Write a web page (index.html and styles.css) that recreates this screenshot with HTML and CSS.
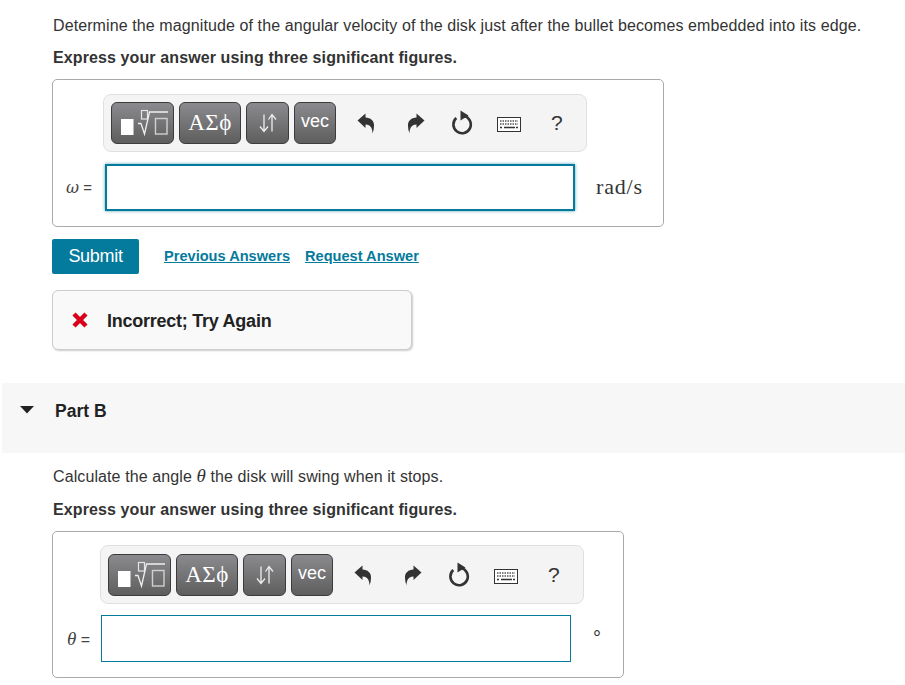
FILE: index.html
```html
<!DOCTYPE html>
<html>
<head>
    <title>Part B</title>
    <link rel="stylesheet" href="styles.css">
</head>
<body>
    <div class="part">
        <p class="prompt">Determine the magnitude of the angular velocity of the disk just after the bullet becomes embedded into its edge.</p>
        <p class="hint">Express your answer using three significant figures.</p>
        <div class="answer-box box-a">
            <div class="toolbar">
                <span class="tool tool-tpl">
                    <svg width="61" height="40" viewBox="1 1 61 40">
                        <rect x="10" y="17" width="12.5" height="16" fill="#fff"/>
                        <rect x="30.5" y="8.5" width="6" height="8.5" fill="none" stroke="#e4e4e4" stroke-width="1.2"/>
                        <path d="M27 21.5 H30 L33.5 32 L38.5 10 H57" fill="none" stroke="#eee" stroke-width="1.3"/>
                        <rect x="44.5" y="16.5" width="11.5" height="15.5" fill="none" stroke="#d0d0d0" stroke-width="1.4"/>
                    </svg>
                </span>
                <span class="tool tool-greek">ΑΣϕ</span>
                <span class="tool tool-arrows">
                    <svg width="18" height="20" viewBox="0 0 18 20"><path d="M5 1.5 V18 M1 13.5 L5 18.5 L9 13.5 M13 18.5 V2 M9.5 6.5 L13 1.5 L17 6.5" fill="none" stroke="#eee" stroke-width="1.3"/></svg>
                </span>
                <span class="tool tool-vec">vec</span>
                <div class="actions">
                    <svg class="act-undo" width="18" height="21" viewBox="0 0 18 21"><path d="M0.5 7.5 L8.5 0.5 V4.5 C13.5 4.5 17.5 8 17 13 C17 15.5 16.5 18 15.5 20.5 C15.5 16 14 11.5 8.5 11.5 V15 Z" fill="#333"/></svg>
                    <svg class="act-redo" width="18" height="21" viewBox="0 0 18 21"><path d="M17.5 7.5 L9.5 0.5 V4.5 C4.5 4.5 0.5 8 1 13 C1 15.5 1.5 18 2.5 20.5 C2.5 16 4 11.5 9.5 11.5 V15 Z" fill="#333"/></svg>
                    <svg class="act-reset" width="22" height="25" viewBox="0 0 22 25"><path d="M13 6 A8.7 8.7 0 1 1 5.3 8" fill="none" stroke="#333" stroke-width="2.6"/><path d="M9.5 0.5 L17.5 5.5 L9.5 10.5 Z" fill="#333"/></svg>
                    <svg class="act-keys" width="24" height="15" viewBox="0 0 24 15"><rect x="0.5" y="0.5" width="23" height="14" fill="#fff" stroke="#333"/><path d="M3 4 H21 M3 7 H21" stroke="#555" stroke-width="1.6" stroke-dasharray="1.5 1"/><path d="M3 10.5 H5 M7 10.5 H18 M19 10.5 H21" stroke="#333" stroke-width="1.6"/></svg>
                    <span class="act-help">?</span>
                </div>
            </div>
            <div class="entry-row">
                <span class="var-label"><i class="var">ω</i> =</span>
                <div class="entry entry-focus"></div>
                <span class="unit">rad/s</span>
            </div>
        </div>
        <div class="submit-row">
            <button class="submit-btn">Submit</button>
            <a class="link link-prev" href="#">Previous Answers</a>
            <a class="link" href="#">Request Answer</a>
        </div>
        <div class="feedback">
            <svg width="18" height="18" viewBox="0 0 18 18"><path d="M3 3 L15 15 M15 3 L3 15" stroke="#d9001b" stroke-width="4.4"/></svg>
            <span>Incorrect; Try Again</span>
        </div>
    </div>

    <div class="part-head">
        <svg width="14" height="8" viewBox="0 0 14 8"><path d="M0 0 H14 L7 7.5 Z" fill="#222"/></svg>
        <h2>Part B</h2>
    </div>

    <div class="part">
        <p class="prompt prompt-b">Calculate the angle <i class="theta">θ</i> the disk will swing when it stops.</p>
        <p class="hint hint-b">Express your answer using three significant figures.</p>
        <div class="answer-box box-b">
            <div class="toolbar">
                <span class="tool tool-tpl">
                    <svg width="61" height="40" viewBox="1 1 61 40">
                        <rect x="10" y="17" width="12.5" height="16" fill="#fff"/>
                        <rect x="30.5" y="8.5" width="6" height="8.5" fill="none" stroke="#e4e4e4" stroke-width="1.2"/>
                        <path d="M27 21.5 H30 L33.5 32 L38.5 10 H57" fill="none" stroke="#eee" stroke-width="1.3"/>
                        <rect x="44.5" y="16.5" width="11.5" height="15.5" fill="none" stroke="#d0d0d0" stroke-width="1.4"/>
                    </svg>
                </span>
                <span class="tool tool-greek">ΑΣϕ</span>
                <span class="tool tool-arrows">
                    <svg width="18" height="20" viewBox="0 0 18 20"><path d="M5 1.5 V18 M1 13.5 L5 18.5 L9 13.5 M13 18.5 V2 M9.5 6.5 L13 1.5 L17 6.5" fill="none" stroke="#eee" stroke-width="1.3"/></svg>
                </span>
                <span class="tool tool-vec">vec</span>
                <div class="actions">
                    <svg class="act-undo" width="18" height="21" viewBox="0 0 18 21"><path d="M0.5 7.5 L8.5 0.5 V4.5 C13.5 4.5 17.5 8 17 13 C17 15.5 16.5 18 15.5 20.5 C15.5 16 14 11.5 8.5 11.5 V15 Z" fill="#333"/></svg>
                    <svg class="act-redo" width="18" height="21" viewBox="0 0 18 21"><path d="M17.5 7.5 L9.5 0.5 V4.5 C4.5 4.5 0.5 8 1 13 C1 15.5 1.5 18 2.5 20.5 C2.5 16 4 11.5 9.5 11.5 V15 Z" fill="#333"/></svg>
                    <svg class="act-reset" width="22" height="25" viewBox="0 0 22 25"><path d="M13 6 A8.7 8.7 0 1 1 5.3 8" fill="none" stroke="#333" stroke-width="2.6"/><path d="M9.5 0.5 L17.5 5.5 L9.5 10.5 Z" fill="#333"/></svg>
                    <svg class="act-keys" width="24" height="15" viewBox="0 0 24 15"><rect x="0.5" y="0.5" width="23" height="14" fill="#fff" stroke="#333"/><path d="M3 4 H21 M3 7 H21" stroke="#555" stroke-width="1.6" stroke-dasharray="1.5 1"/><path d="M3 10.5 H5 M7 10.5 H18 M19 10.5 H21" stroke="#333" stroke-width="1.6"/></svg>
                    <span class="act-help">?</span>
                </div>
            </div>
            <div class="entry-row">
                <span class="var-label"><i class="theta">θ</i> =</span>
                <div class="entry"></div>
                <span class="unit-deg">°</span>
            </div>
        </div>
    </div>
</body>
</html>
```

FILE: styles.css
```css
* {
    box-sizing: border-box;
}
html, body {
    margin: 0;
    height: 685px;
    overflow: hidden;
}
body {
    background-color: #fff;
    font-family: "Liberation Sans", Arial, sans-serif;
    font-size: 16px;
    color: #333;
}
.part {
    padding-left: 52px;
}
.prompt {
    margin: 0;
    padding-top: 16px;
    padding-left: 1px;
    line-height: 19px;
    height: 35px;
    letter-spacing: 0.1px;
}
.prompt-b {
    padding-top: 13px;
    height: 33px;
}
.hint {
    margin: 13px 0 0 1px;
    line-height: 19px;
    font-weight: bold;
    letter-spacing: 0.11px;
}
.hint-b {
    margin-top: 14px;
}
.answer-box {
    border: 1px solid #aaa;
    border-radius: 5px;
    height: 148px;
    background: #fff;
}
.box-a {
    width: 612px;
    margin-top: 12px;
    padding: 14px 0 0 50px;
}
.box-b {
    width: 572px;
    height: 147px;
    margin-top: 12px;
    padding: 13px 0 0 47px;
}
.toolbar {
    display: flex;
    align-items: center;
    width: 484px;
    height: 58px;
    padding-left: 7px;
    background: #f4f4f4;
    border: 1px solid #e0e0e0;
    border-radius: 8px;
}
.box-b .toolbar {
    height: 59px;
}
.tool {
    display: flex;
    align-items: center;
    justify-content: center;
    height: 42px;
    margin-right: 5px;
    border: 1px solid #3c3c3c;
    border-radius: 6px;
    background: linear-gradient(#8b8b8f, #5e5e5e);
    color: #fff;
}
.tool-tpl {
    width: 63px;
}
.tool-tpl svg {
    flex: none;
}
.tool-greek {
    width: 62px;
    font-family: "Liberation Serif", serif;
    font-size: 23px;
    letter-spacing: 0.5px;
}
.tool-arrows {
    width: 43px;
}
.tool-vec {
    width: 42px;
    margin-right: 0;
    font-size: 18px;
    padding-bottom: 3px;
}
.actions {
    display: flex;
    align-items: center;
    flex: 1;
    height: 100%;
}
.act-undo {
    margin-left: 21px;
    margin-top: 1px;
}
.act-redo {
    margin-left: 32px;
    margin-top: 1px;
}
.act-reset {
    margin-left: 26px;
    margin-top: -1px;
}
.act-keys {
    margin-left: 24px;
    margin-top: 3px;
}
.act-help {
    margin-left: 30px;
    font-size: 21px;
    color: #333;
}
.entry-row {
    display: flex;
    align-items: center;
    margin-top: 12px;
}
.var-label {
    width: 52px;
    margin-left: -50px;
    padding-left: 13px;
    font-size: 15px;
    color: #444;
}
.var, .theta {
    font-family: "Liberation Serif", serif;
    font-size: 19px;
    font-style: italic;
}
.var {
    font-family: "DejaVu Serif", serif;
    font-size: 16px;
}
.entry {
    width: 470px;
    height: 47px;
    border: 1px solid #047a9c;
    background: #fff;
}
.entry-focus {
    border-width: 2px;
    box-shadow: 0 0 3px rgba(4, 122, 156, 0.7);
}
.box-b .entry-row {
    margin-top: 11px;
}
.box-b .var-label {
    width: 48px;
    margin-left: -47px;
    padding-left: 14px;
    font-size: 16px;
}
.unit {
    margin-left: 21px;
    margin-top: -2px;
    font-family: "Liberation Serif", serif;
    font-size: 22px;
    letter-spacing: 0.8px;
}
.unit-deg {
    margin-left: 22px;
    font-size: 20px;
}
.submit-row {
    display: flex;
    align-items: center;
    margin-top: 12px;
}
.submit-btn {
    width: 87px;
    height: 35px;
    border: none;
    border-radius: 2px;
    background: #047a9c;
    color: #fff;
    font-family: "Liberation Sans", Arial, sans-serif;
    font-size: 18px;
    letter-spacing: -0.3px;
}
.link {
    margin-left: 15px;
    margin-top: -2px;
    color: #047a9c;
    font-size: 14.6px;
    font-weight: bold;
    text-decoration: underline;
}
.link-prev {
    margin-left: 25px;
}
.feedback {
    display: flex;
    align-items: center;
    width: 360px;
    height: 60px;
    margin-top: 16px;
    padding-left: 18px;
    border: 1px solid #ccc;
    border-radius: 6px;
    background: #f9f9f9;
    box-shadow: 1px 1px 2px rgba(0, 0, 0, 0.2);
    font-weight: bold;
    font-size: 18px;
    color: #222;
    letter-spacing: -0.25px;
}
.feedback span {
    margin-left: 18px;
    padding-top: 2px;
}
.part-head {
    display: flex;
    align-items: center;
    height: 70px;
    margin: 33px 0 0 2px;
    padding: 0 0 16px 18px;
    background: #f7f7f7;
}
.part-head h2 {
    margin: 0 0 0 21px;
    padding-top: 2px;
    font-size: 17.5px;
    color: #222;
}
```
